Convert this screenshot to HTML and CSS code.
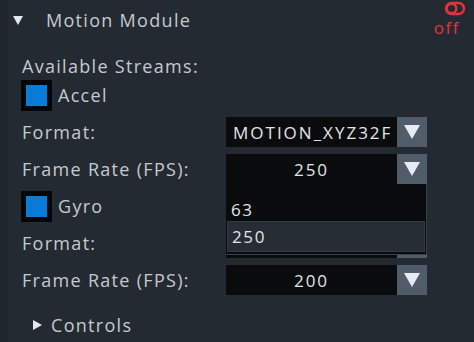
FILE: index.html
```html
<!DOCTYPE html>
<html lang="en">
  <head>
    <meta charset="UTF-8" />
    <title>Motion Module</title>
    <link rel="stylesheet" href="styles.css">
  </head>
  <body>
    <div class="panel">
      <!-- header -->
      <div class="module-header">
        <span class="tri-down"></span>
        <span class="module-title">Motion Module</span>
        <div class="power">
          <svg class="toggle-icon" width="22" height="16" viewBox="0 0 22 16">
            <rect x="2" y="3" width="18" height="11" rx="5.5" fill="none" stroke="#e2343f" stroke-width="2.4" />
            <circle cx="7.5" cy="8.5" r="4.8" fill="none" stroke="#e2343f" stroke-width="2.4" />
          </svg>
          <span class="power-label">off</span>
        </div>
      </div>

      <div class="streams-label">Available Streams:</div>

      <div class="rows">
        <div class="check-row">
          <span class="checkbox"></span>
          <span class="check-label">Accel</span>
        </div>
        <div class="field-row">
          <span class="field-label">Format:</span>
          <div class="combo">
            <span class="combo-value left">MOTION_XYZ32F</span>
            <span class="combo-btn"><span class="tri-btn"></span></span>
          </div>
        </div>
        <div class="field-row">
          <span class="field-label">Frame Rate (FPS):</span>
          <div class="combo">
            <span class="combo-value">250</span>
            <span class="combo-btn"><span class="tri-btn"></span></span>
          </div>
        </div>

        <div class="check-row">
          <span class="checkbox"></span>
          <span class="check-label">Gyro</span>
        </div>
        <div class="field-row">
          <span class="field-label">Format:</span>
          <!-- covered by the open list -->
          <div class="combo">
            <span class="combo-value left"></span>
            <span class="combo-btn"><span class="tri-btn"></span></span>
          </div>
        </div>
        <div class="field-row">
          <span class="field-label">Frame Rate (FPS):</span>
          <div class="combo">
            <span class="combo-value">200</span>
            <span class="combo-btn"><span class="tri-btn"></span></span>
          </div>
        </div>
      </div>

      <div class="controls-row">
        <span class="tri-right"></span>
        <span class="controls-label">Controls</span>
      </div>

      <!-- open dropdown list -->
      <div class="popup">
        <div class="popup-item first">63</div>
        <div class="popup-item selected">250</div>
      </div>
    </div>
  </body>
</html>
```

FILE: styles.css
```css
:root {
  --bg: #242a31;
  --strip: #1f252b;
  --text: #c5cad0;
  --combo-bg: #0a0b0c;
  --btn-bg: #505c68;
  --red: #e2343f;
}

* {
  margin: 0;
  padding: 0;
  box-sizing: border-box;
}

body {
  background: var(--bg);
  color: var(--text);
  font-family: "Open Sans", "DejaVu Sans", sans-serif;
  font-size: 18px;
  letter-spacing: 1.3px;
  overflow: hidden;
}

.panel {
  position: relative;
  height: 342px;
  border-left: 8px solid var(--strip);
  padding-left: 14px;
}

/* header */
.module-header {
  height: 40px;
  display: flex;
  align-items: center;
}

.tri-down {
  width: 0;
  height: 0;
  margin-left: -9px;
  border-left: 5px solid transparent;
  border-right: 5px solid transparent;
  border-top: 9px solid #e4e8ec;
}

.module-title {
  margin-left: 23px;
}

.power {
  position: absolute;
  top: 0;
  right: 14px;
  display: flex;
  flex-direction: column;
  align-items: flex-end;
}

.toggle-icon {
  margin-right: -6px;
}

.power-label {
  color: var(--red);
  font-size: 17px;
  line-height: 24px;
  letter-spacing: 1.5px;
}

.streams-label {
  margin-top: 14px;
  line-height: 24px;
}

/* stream rows */
.rows {
  margin-top: 2px;
  display: flex;
  flex-direction: column;
  gap: 7px;
}

.check-row,
.field-row {
  height: 30px;
  display: flex;
  align-items: center;
}

.checkbox {
  width: 31px;
  height: 31px;
  margin-left: -1px;
  background: #0a7bd6;
  border: 5px solid #050607;
}

.check-label {
  margin-left: 6px;
}

.field-label {
  width: 204px;
}

.combo {
  width: 201px;
  height: 30px;
  display: flex;
  background: var(--combo-bg);
}

.combo-value {
  flex: 1;
  font-size: 17px;
  letter-spacing: 2px;
  color: #e2e5e8;
  display: flex;
  align-items: center;
  justify-content: center;
}

.combo-value.left {
  justify-content: flex-start;
  padding-left: 7px;
  white-space: nowrap;
  overflow: hidden;
}

.combo-btn {
  width: 30px;
  height: 30px;
  background: var(--btn-bg);
  display: flex;
  align-items: center;
  justify-content: center;
}

.tri-btn {
  width: 0;
  height: 0;
  border-left: 8px solid transparent;
  border-right: 8px solid transparent;
  border-top: 14px solid #e6ecf2;
}

/* controls */
.controls-row {
  margin-top: 18px;
  display: flex;
  align-items: center;
  line-height: 24px;
}

.tri-right {
  width: 0;
  height: 0;
  margin-left: 11px;
  border-top: 5px solid transparent;
  border-bottom: 5px solid transparent;
  border-left: 9px solid #e4e8ec;
}

.controls-label {
  margin-left: 9px;
}

/* popup list of the open combo */
.popup {
  position: absolute;
  left: 218px;
  top: 184px;
  width: 201px;
  height: 71px;
  background: var(--combo-bg);
  border-right: 1px solid #3a434d;
  border-bottom: 1px solid #3a434d;
  padding: 8px 1px 0 1px;
}

.popup-item {
  height: 29px;
  display: flex;
  align-items: center;
  padding-left: 4px;
  font-size: 17px;
  letter-spacing: 1.6px;
  color: #e2e5e8;
}

.popup-item.first {
  padding-top: 6px;
}

.popup-item.selected {
  height: 31px;
  background: #262d34;
  border: 1px solid #323a43;
}
```
